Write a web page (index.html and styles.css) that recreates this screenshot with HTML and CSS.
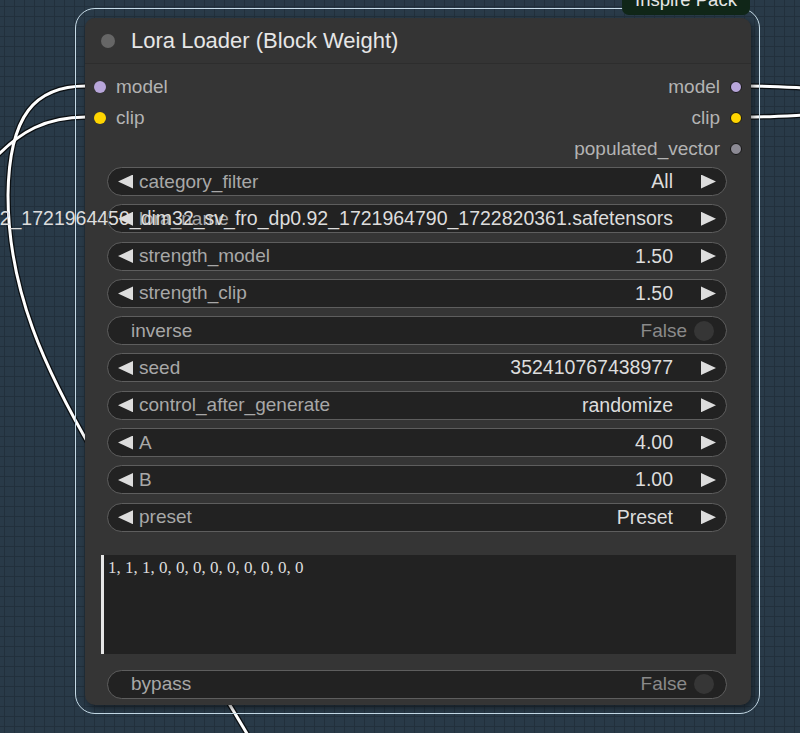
FILE: index.html
```html
<!DOCTYPE html>
<html>
<head>
<meta charset="utf-8">
<link rel="stylesheet" href="styles.css">
</head>
<body>
<div class="canvas">
  <svg class="wires" width="800" height="733" viewBox="0 0 800 733">
    <g class="wire-under">
      <path d="M86 86 C 35 86, 9 115, 8 195 C 8 290, 45 370, 95 455"/>
      <path d="M86 117 C 45 117, 20 132, -5 158"/>
      <path d="M215 680 L 252 742"/>
      <path d="M745 86 C 770 86, 785 87, 805 88"/>
      <path d="M745 117 C 770 117, 785 116, 805 115"/>
    </g>
    <g class="wire-top">
      <path d="M86 86 C 35 86, 9 115, 8 195 C 8 290, 45 370, 95 455"/>
      <path d="M86 117 C 45 117, 20 132, -5 158"/>
      <path d="M215 680 L 252 742"/>
      <path d="M745 86 C 770 86, 785 87, 805 88"/>
      <path d="M745 117 C 770 117, 785 116, 805 115"/>
    </g>
  </svg>

  <div class="selection"></div>
  <div class="badge">Inspire Pack</div>

  <div class="node">
    <div class="title">
      <span class="title-dot"></span>
      <span class="title-text">Lora Loader (Block Weight)</span>
    </div>

    <div class="slots">
      <div class="slot-row">
        <div class="slot-in"><span class="dot dot-model"></span><span>model</span></div>
        <div class="slot-out"><span>model</span><span class="dot dot-model out"></span></div>
      </div>
      <div class="slot-row">
        <div class="slot-in"><span class="dot dot-clip"></span><span>clip</span></div>
        <div class="slot-out"><span>clip</span><span class="dot dot-clip out"></span></div>
      </div>
      <div class="slot-row">
        <div class="slot-in"></div>
        <div class="slot-out"><span>populated_vector</span><span class="dot dot-vec out"></span></div>
      </div>
    </div>

    <div class="widgets">
      <div class="widget combo">
        <span class="arrow-l"></span><span class="label">category_filter</span>
        <span class="value-box"><span class="value">All</span></span><span class="arrow-r"></span>
      </div>
      <div class="widget combo">
        <span class="arrow-l"></span><span class="label">lora_name</span>
        <span class="value-box"><span class="value">2_1721964450_dim32_sv_fro_dp0.92_1721964790_1722820361.safetensors</span></span><span class="arrow-r"></span>
      </div>
      <div class="widget combo">
        <span class="arrow-l"></span><span class="label">strength_model</span>
        <span class="value-box"><span class="value">1.50</span></span><span class="arrow-r"></span>
      </div>
      <div class="widget combo">
        <span class="arrow-l"></span><span class="label">strength_clip</span>
        <span class="value-box"><span class="value">1.50</span></span><span class="arrow-r"></span>
      </div>
      <div class="widget toggle">
        <span class="label">inverse</span>
        <span class="value-box"><span class="value off">False</span></span><span class="knob"></span>
      </div>
      <div class="widget combo">
        <span class="arrow-l"></span><span class="label">seed</span>
        <span class="value-box"><span class="value">352410767438977</span></span><span class="arrow-r"></span>
      </div>
      <div class="widget combo">
        <span class="arrow-l"></span><span class="label">control_after_generate</span>
        <span class="value-box"><span class="value">randomize</span></span><span class="arrow-r"></span>
      </div>
      <div class="widget combo">
        <span class="arrow-l"></span><span class="label">A</span>
        <span class="value-box"><span class="value">4.00</span></span><span class="arrow-r"></span>
      </div>
      <div class="widget combo">
        <span class="arrow-l"></span><span class="label">B</span>
        <span class="value-box"><span class="value">1.00</span></span><span class="arrow-r"></span>
      </div>
      <div class="widget combo">
        <span class="arrow-l"></span><span class="label">preset</span>
        <span class="value-box"><span class="value">Preset</span></span><span class="arrow-r"></span>
      </div>
    </div>

    <div class="textarea">1, 1, 1, 0, 0, 0, 0, 0, 0, 0, 0, 0</div>

    <div class="bottom">
      <div class="widget toggle">
        <span class="label">bypass</span>
        <span class="value-box"><span class="value off">False</span></span><span class="knob"></span>
      </div>
    </div>
  </div>
</div>
</body>
</html>
```

FILE: styles.css
```css
html, body {
  margin: 0;
  padding: 0;
  background: #283846;
}

.canvas {
  position: relative;
  width: 800px;
  height: 733px;
  overflow: hidden;
  background-color: #293a48;
  background-image:
    linear-gradient(#22303c 1px, transparent 1px),
    linear-gradient(90deg, #22303c 1px, transparent 1px);
  background-size: 10px 10px;
  background-position: 4px 6px;
  font-family: "Liberation Sans", Arial, sans-serif;
}

.wires {
  position: absolute;
  left: 0;
  top: 0;
}

.wire-under path {
  fill: none;
  stroke: #0b0f12;
  stroke-width: 5.5;
}

.wire-top path {
  fill: none;
  stroke: #ffffff;
  stroke-width: 3;
}

.selection {
  position: absolute;
  left: 75px;
  top: 8px;
  width: 685px;
  height: 706px;
  box-sizing: border-box;
  border: 1.5px solid #c6dbe7;
  border-radius: 20px;
}

.badge {
  position: absolute;
  left: 622px;
  top: -16px;
  width: 128px;
  height: 31px;
  box-sizing: border-box;
  background: #102618;
  border-radius: 7px;
  color: #e6e6e6;
  font-size: 18.5px;
  line-height: 31px;
  text-align: center;
}

.node {
  position: absolute;
  left: 85px;
  top: 18px;
  width: 666px;
  height: 687px;
  background: #353535;
  border-radius: 10px;
  box-shadow: 2px 3px 6px rgba(0, 0, 0, 0.45);
  display: flex;
  flex-direction: column;
}

.title {
  height: 46px;
  box-sizing: border-box;
  padding-top: 1px;
  display: flex;
  align-items: center;
  padding-left: 16px;
  gap: 16px;
  border-bottom: 1px solid #2d2d2d;
  border-radius: 10px 10px 0 0;
  background: #343434;
}

.title-dot {
  width: 14px;
  height: 14px;
  border-radius: 50%;
  background: #666666;
}

.title-text {
  color: #e6e6e6;
  font-size: 22px;
}

.slots {
  padding: 7px 9px 0 9px;
  display: flex;
  flex-direction: column;
}

.slot-row {
  height: 31px;
  display: flex;
  justify-content: space-between;
  align-items: center;
  color: #b3b3b3;
  font-size: 19px;
}

.slot-in, .slot-out {
  display: flex;
  align-items: center;
  gap: 10px;
}

.dot {
  width: 12px;
  height: 12px;
  border-radius: 50%;
  box-sizing: border-box;
}

.dot.out {
  border: 1.5px solid #151515;
}

.dot-model { background: #b8a6da; }
.dot-clip { background: #ffd500; }
.dot-vec { background: #8c8a94; }

.widgets {
  padding: 3px 24px 0 22px;
  display: flex;
  flex-direction: column;
  gap: 8.3px;
}

.widget {
  height: 29px;
  box-sizing: border-box;
  border: 1px solid #5e5e5e;
  border-radius: 15px;
  background: #222222;
  display: flex;
  align-items: center;
  font-size: 19px;
  color: #a8a8a8;
  white-space: nowrap;
}

.combo {
  padding: 0 10px;
}

.arrow-l, .arrow-r {
  width: 15px;
  height: 14px;
  background: #dddddd;
  flex-shrink: 0;
}

.arrow-l {
  clip-path: polygon(0 50%, 100% 0, 100% 100%);
  margin-right: 6px;
}

.arrow-r {
  clip-path: polygon(0 0, 100% 50%, 0 100%);
  margin-left: 28px;
}

.label {
  flex-shrink: 0;
}

.value-box {
  flex: 1;
  min-width: 0;
  display: flex;
  justify-content: flex-end;
}

.value {
  flex-shrink: 0;
  color: #dddddd;
  font-size: 19.5px;
}

.value.off {
  color: #8a8a8a;
  font-size: 19px;
}

.toggle {
  padding: 0 12px 0 23px;
}

.knob {
  width: 20px;
  height: 20px;
  border-radius: 50%;
  background: #363636;
  margin-left: 7px;
  flex-shrink: 0;
}

.textarea {
  margin: 23.5px 15px 0 16px;
  height: 99px;
  box-sizing: border-box;
  background: #222222;
  border-left: 3px solid #e6e6e6;
  padding: 3px 0 0 4px;
  font-family: "Liberation Serif", "Times New Roman", serif;
  font-size: 17px;
  color: #dcdcdc;
}

.bottom {
  padding: 15.5px 24px 0 22px;
}
```
